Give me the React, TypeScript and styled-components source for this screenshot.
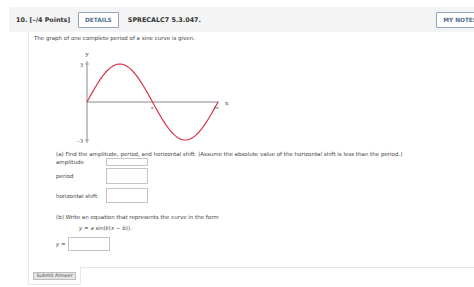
import { createGlobalStyle, styled } from "styled-components";

const GlobalStyle = createGlobalStyle`
  body {
    margin: 0;
    background: #ffffff;
    font-family: "DejaVu Sans", Verdana, sans-serif;
    color: #333333;
  }
`;

const Page = styled.div`
  width: 474px;
  height: 287px;
  overflow: hidden;
  padding-top: 7px;
  padding-left: 9px;
  box-sizing: border-box;
`;

const Header = styled.div`
  display: flex;
  align-items: center;
  height: 25px;
  margin-right: -10px;
  background: #f4f4f4;
  padding-left: 7px;
  white-space: nowrap;
`;

const QNumber = styled.div`
  font-size: 6.4px;
  font-weight: bold;
  color: #333;
  width: 62px;
`;

const OutlineButton = styled.div`
  display: flex;
  align-items: center;
  justify-content: center;
  height: 16px;
  padding: 0 6px;
  border: 1px solid #8fa4b8;
  border-radius: 1px;
  background: #ffffff;
  color: #4b6e8c;
  font-size: 5.8px;
  font-weight: bold;
  box-sizing: border-box;
`;

const Code = styled.div`
  font-size: 6.4px;
  font-weight: bold;
  color: #333;
  margin-left: 9px;
  flex: 1;
`;

const Content = styled.div`
  margin-left: 19px;
  border-left: 1px solid #e8e8e8;
  padding-left: 5px;
  padding-top: 2px;
  height: 235px;
  box-sizing: border-box;
  font-size: 5.5px;
  color: #444;
`;

const Prompt = styled.div`
  height: 8px;
  line-height: 8px;
`;

const Graph = styled.svg`
  display: block;
  margin-left: 36px;
  margin-top: 4px;
`;

const Part = styled.div`
  margin-left: 22px;
`;

const PartText = styled.div<{ $mt?: number }>`
  line-height: 8px;
  margin-top: ${(p) => p.$mt ?? 0}px;
`;

const FieldRow = styled.div<{ $mt?: number }>`
  display: grid;
  grid-template-columns: 50px 42px;
  align-items: center;
  margin-top: ${(p) => p.$mt ?? 0}px;
`;

const Box = styled.div<{ $h: number }>`
  width: 42px;
  height: ${(p) => p.$h}px;
  border: 1px solid #c4c4c4;
  background: #ffffff;
  box-sizing: border-box;
`;

const Formula = styled.div`
  margin-left: 23px;
  margin-top: 3px;
  line-height: 8px;
`;

const AnswerRow = styled.div`
  display: flex;
  align-items: center;
  gap: 2px;
  margin-top: 5px;
`;

const Footer = styled.div`
  display: flex;
  margin-left: 19px;
`;

const SubmitCell = styled.div`
  width: 53px;
  height: 18px;
  border-left: 1px solid #e8e8e8;
  border-right: 1px solid #e8e8e8;
  border-bottom: 1px solid #e8e8e8;
  display: flex;
  align-items: center;
  padding-left: 4px;
  box-sizing: border-box;
`;

const SubmitButton = styled.div`
  height: 8px;
  width: 43px;
  background: #e4e4e4;
  border: 1px solid #bdbdbd;
  font-size: 4.8px;
  color: #555;
  display: flex;
  align-items: center;
  justify-content: center;
  box-sizing: border-box;
`;

const Filler = styled.div`
  flex: 1;
  border-top: 1px solid #e8e8e8;
`;

const sinePath = () => {
  const pts: string[] = [];
  for (let i = 0; i <= 80; i++) {
    const t = (i / 80) * Math.PI * 2;
    const x = 17 + (i / 80) * 131;
    const y = 56 - 38 * Math.sin(t);
    pts.push(`${i === 0 ? "M" : "L"}${x.toFixed(2)},${y.toFixed(2)}`);
  }
  return pts.join(" ");
};

const SineGraph = () => (
  <Graph width="170" height="100" viewBox="0 0 170 100">
    <line x1="17" y1="15" x2="17" y2="97" stroke="#8a8a8a" strokeWidth="1" />
    <line x1="17" y1="56" x2="149" y2="56" stroke="#8a8a8a" strokeWidth="1" />
    <line x1="15" y1="18" x2="19" y2="18" stroke="#8a8a8a" strokeWidth="0.8" />
    <line x1="15" y1="94" x2="19" y2="94" stroke="#8a8a8a" strokeWidth="0.8" />
    <path d={sinePath()} fill="none" stroke="#d6324b" strokeWidth="1.2" />
    <g fontFamily="'Liberation Serif', serif" fill="#444">
      <text x="17" y="10" fontSize="7" textAnchor="middle">y</text>
      <text x="13" y="20.5" fontSize="6" textAnchor="end">3</text>
      <text x="13" y="96.5" fontSize="6" textAnchor="end">−3</text>
      <text x="155" y="58.5" fontSize="7">x</text>
      <text x="82" y="63" fontSize="5" fontStyle="italic" textAnchor="middle">π</text>
      <text x="146" y="63" fontSize="5" fontStyle="italic" textAnchor="middle">2π</text>
    </g>
  </Graph>
);

export default function App() {
  return (
    <Page>
      <GlobalStyle />
      <Header>
        <QNumber>10. [–/4 Points]</QNumber>
        <OutlineButton>DETAILS</OutlineButton>
        <Code>SPRECALC7 5.3.047.</Code>
        <OutlineButton>MY NOTES</OutlineButton>
      </Header>
      <Content>
        <Prompt>The graph of one complete period of a sine curve is given.</Prompt>
        <SineGraph />
        <Part>
          <PartText $mt={4}>
            (a) Find the amplitude, period, and horizontal shift. (Assume the absolute value of the horizontal shift is less than the period.)
          </PartText>
          <FieldRow>
            <span>amplitude</span>
            <Box $h={8} />
          </FieldRow>
          <FieldRow $mt={2}>
            <span>period</span>
            <Box $h={16} />
          </FieldRow>
          <FieldRow $mt={4}>
            <span>horizontal shift</span>
            <Box $h={15} />
          </FieldRow>
          <PartText $mt={10}>(b) Write an equation that represents the curve in the form</PartText>
          <Formula>
            <i>y</i> = <i>a</i> sin(<i>k</i>(<i>x</i> − <i>b</i>)).
          </Formula>
          <AnswerRow>
            <span>
              <i>y</i> =
            </span>
            <Box $h={14} />
          </AnswerRow>
        </Part>
      </Content>
      <Footer>
        <SubmitCell>
          <SubmitButton>Submit Answer</SubmitButton>
        </SubmitCell>
        <Filler />
      </Footer>
    </Page>
  );
}
